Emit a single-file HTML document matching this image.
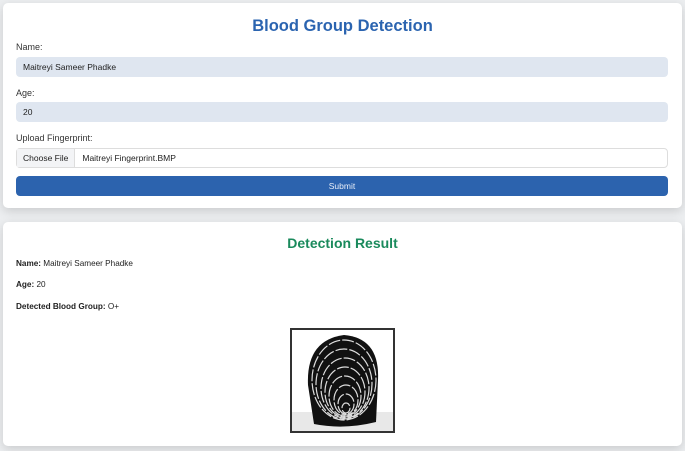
<!DOCTYPE html>
<html><head><style>
body{margin:0;background:#eceef0;font-family:"Liberation Sans",sans-serif;width:685px;height:451px;overflow:hidden;position:relative;color:#222}
.card{position:absolute;left:3px;width:679px;background:#fff;border-radius:5px;box-shadow:0 3px 10px rgba(0,0,0,.15)}
.abs{position:absolute}
.lbl{position:absolute;left:13px;font-size:9px;color:#333}
.inp{position:absolute;left:13px;width:652px;height:20px;background:#dfe6f0;border-radius:4px;font-size:8.5px;line-height:20px;box-sizing:border-box;padding-left:7px;color:#222}
</style></head><body>
<div class="card" style="top:3px;height:205px">
 <div class="abs" style="left:0;width:679px;top:14px;text-align:center;font-size:16.5px;font-weight:bold;color:#2b64b0">Blood Group Detection</div>
 <div class="lbl" style="top:39px">Name:</div>
 <div class="inp" style="top:54px">Maitreyi Sameer Phadke</div>
 <div class="lbl" style="top:85px">Age:</div>
 <div class="inp" style="top:99px">20</div>
 <div class="lbl" style="top:130px">Upload Fingerprint:</div>
 <div class="abs" style="left:13px;top:145px;width:652px;height:20px;border:1px solid #ddd;border-radius:4px;box-sizing:border-box;font-size:8.5px;line-height:18px">
  <span style="display:inline-block;background:#f3f4f6;border-right:1px solid #ddd;padding:0 6px;height:18px">Choose File</span><span style="padding-left:7px">Maitreyi Fingerprint.BMP</span></div>
 <div class="abs" style="left:13px;top:173px;width:652px;height:20px;background:#2c63ae;border-radius:4px;color:#e8eef8;font-size:8.5px;line-height:21px;text-align:center">Submit</div>
</div>
<div class="card" style="top:222px;height:224px">
 <div class="abs" style="left:0;width:679px;top:13px;text-align:center;font-size:14px;font-weight:bold;color:#1a8a5c">Detection Result</div>
 <div class="abs" style="left:13px;top:37px;font-size:8.2px"><b>Name:</b> Maitreyi Sameer Phadke</div>
 <div class="abs" style="left:13px;top:58px;font-size:8.2px"><b>Age:</b> 20</div>
 <div class="abs" style="left:13px;top:80px;font-size:8.2px"><b>Detected Blood Group:</b> O+</div>
 <div class="abs" style="left:287px;top:106px;width:101px;height:101px;border:2px solid #333;background:#fff;overflow:hidden">
  <svg width="101" height="101" viewBox="0 0 101 101">
   <rect x="0" y="82" width="101" height="19" fill="#e8e8e8"/>
   <path d="M16 55 Q14 10 52 5 Q88 8 86 50 L84 92 Q52 100 22 94 Z" fill="#111"/>
   <g fill="none" stroke="#ddd" stroke-width="1.2" stroke-dasharray="12 2">
    <ellipse cx="54" cy="78" rx="4" ry="5"/>
    <ellipse cx="54" cy="74" rx="8" ry="10"/>
    <ellipse cx="54" cy="70" rx="12" ry="15"/>
    <ellipse cx="53" cy="66" rx="16" ry="20"/>
    <ellipse cx="53" cy="62" rx="20" ry="25"/>
    <ellipse cx="53" cy="58" rx="24" ry="30"/>
    <ellipse cx="52" cy="54" rx="28" ry="35"/>
    <ellipse cx="52" cy="50" rx="32" ry="40"/>
   </g>
  </svg>
 </div>
</div>
</body></html>
